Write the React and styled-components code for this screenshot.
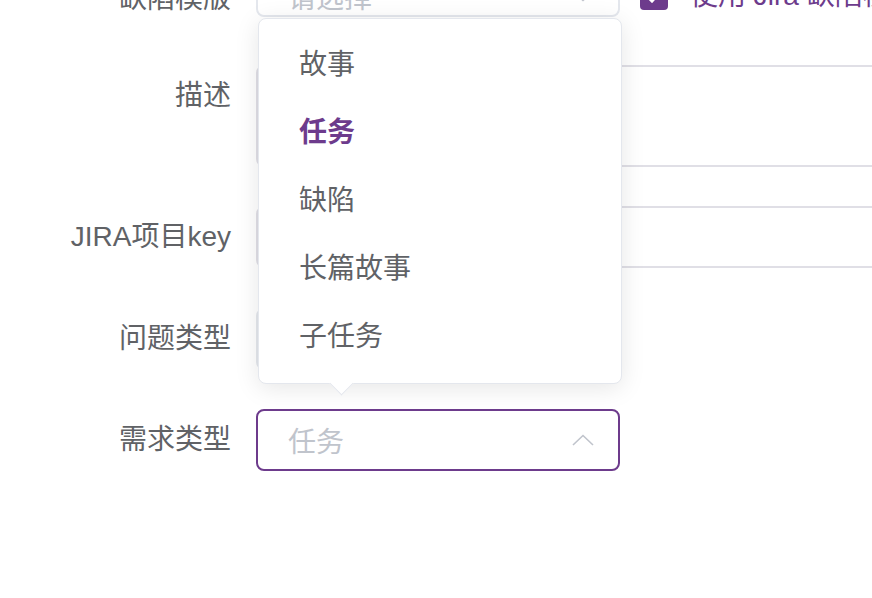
import styled, { createGlobalStyle } from 'styled-components'

const purple = '#6d3b8c'

const GlobalStyle = createGlobalStyle`
	html, body {
		margin: 0;
		padding: 0;
		background: #fff;
		overflow: hidden;
	}
	body {
		font-family: 'Liberation Sans', 'Noto Sans CJK SC', sans-serif;
	}
`

const Page = styled.div`
	width: 872px;
	height: 598px;
	overflow: hidden;
`

// page is scrolled a little, the first row is cut by the top edge
const Form = styled.form`
	margin-top: -45px;
	width: 1100px;
`

const Row = styled.div`
	display: flex;
	align-items: flex-start;
	margin-bottom: ${(p) => p.$gap || 39}px;
`

const Label = styled.label`
	flex: 0 0 231px;
	padding-right: 25px;
	text-align: right;
	font-size: 28px;
	color: #606266;
	padding-top: ${(p) => p.$shift || 0}px;
	line-height: ${(p) => 62 - (p.$shift || 0)}px;
`

const Content = styled.div`
	display: flex;
	align-items: flex-start;
	gap: 20px;
	flex: 1;
`

const SelectBox = styled.div`
	position: relative;
	box-sizing: border-box;
	width: 364px;
	height: 62px;
	display: flex;
	align-items: center;
	justify-content: space-between;
	padding: ${(p) => p.$shift || 0}px 24px 0 30px;
	border: 2px solid ${(p) => (p.$focused ? purple : '#e4e7ed')};
	border-radius: 8px;
	background: #fff;
`

const Placeholder = styled.span`
	font-size: 28px;
	color: #c0c4cc;
`

const TextArea = styled.div`
	box-sizing: border-box;
	width: 800px;
	height: 102px;
	border: 2px solid #e0dfe6;
	border-radius: 8px;
`

const Input = styled.div`
	box-sizing: border-box;
	width: 800px;
	height: 62px;
	border: 2px solid #e0dfe6;
	border-radius: 8px;
`

const CheckField = styled.div`
	display: flex;
	align-items: center;
	gap: 22px;
	margin-top: 27px;
	font-size: 28px;
	line-height: 28px;
	color: ${purple};
	white-space: nowrap;
`

const CheckBox = styled.span`
	display: flex;
	align-items: center;
	justify-content: center;
	width: 28px;
	height: 28px;
	border-radius: 4px;
	background: ${purple};
`

const Dropdown = styled.ul`
	position: absolute;
	left: 0;
	bottom: calc(100% + 27px);
	z-index: 10;
	box-sizing: border-box;
	width: 364px;
	margin: 0;
	padding: 12px 0;
	list-style: none;
	background: #fff;
	border: 1px solid #e4e7ed;
	border-radius: 8px;
	box-shadow: 0 4px 24px rgba(0, 0, 0, 0.1);

	&::after {
		content: '';
		position: absolute;
		left: 74px;
		bottom: -9px;
		width: 16px;
		height: 16px;
		background: #fff;
		border-right: 1px solid #e4e7ed;
		border-bottom: 1px solid #e4e7ed;
		transform: rotate(45deg);
	}
`

const Option = styled.li`
	height: 68px;
	line-height: 68px;
	padding: 0 40px;
	font-size: 28px;
	color: ${(p) => (p.$selected ? purple : '#606266')};
	font-weight: ${(p) => (p.$selected ? 700 : 400)};
`

const Chevron = ({ up }) => (
	<svg width='22' height='12' viewBox='0 0 22 12' fill='none'>
		<path
			d={up ? 'M1 11 L11 1.5 L21 11' : 'M1 1 L11 10.5 L21 1'}
			stroke='#c0c4cc'
			strokeWidth='1.6'
		/>
	</svg>
)

const options = ['故事', '任务', '缺陷', '长篇故事', '子任务']

export default function App() {
	return (
		<Page>
			<GlobalStyle />
			<Form>
				<Row $gap={48}>
					<Label $shift={26}>缺陷模版</Label>
					<Content>
						<SelectBox $shift={20}>
							<Placeholder>请选择</Placeholder>
							<Chevron />
						</SelectBox>
						<CheckField>
							<CheckBox>
								<svg width='18' height='14' viewBox='0 0 18 14' fill='none'>
									<path d='M2 7 L7 12 L16 2' stroke='#fff' strokeWidth='3' />
								</svg>
							</CheckBox>
							使用 Jira 缺陷模板
						</CheckField>
					</Content>
				</Row>
				<Row>
					<Label>描述</Label>
					<Content>
						<TextArea />
					</Content>
				</Row>
				<Row $gap={40}>
					<Label>JIRA项目key</Label>
					<Content>
						<Input />
					</Content>
				</Row>
				<Row>
					<Label>问题类型</Label>
					<Content>
						<SelectBox />
					</Content>
				</Row>
				<Row>
					<Label>需求类型</Label>
					<Content>
						<SelectBox $focused>
							<Placeholder>任务</Placeholder>
							<Chevron up />
							<Dropdown>
								{options.map((o) => (
									<Option key={o} $selected={o === '任务'}>
										{o}
									</Option>
								))}
							</Dropdown>
						</SelectBox>
					</Content>
				</Row>
			</Form>
		</Page>
	)
}
